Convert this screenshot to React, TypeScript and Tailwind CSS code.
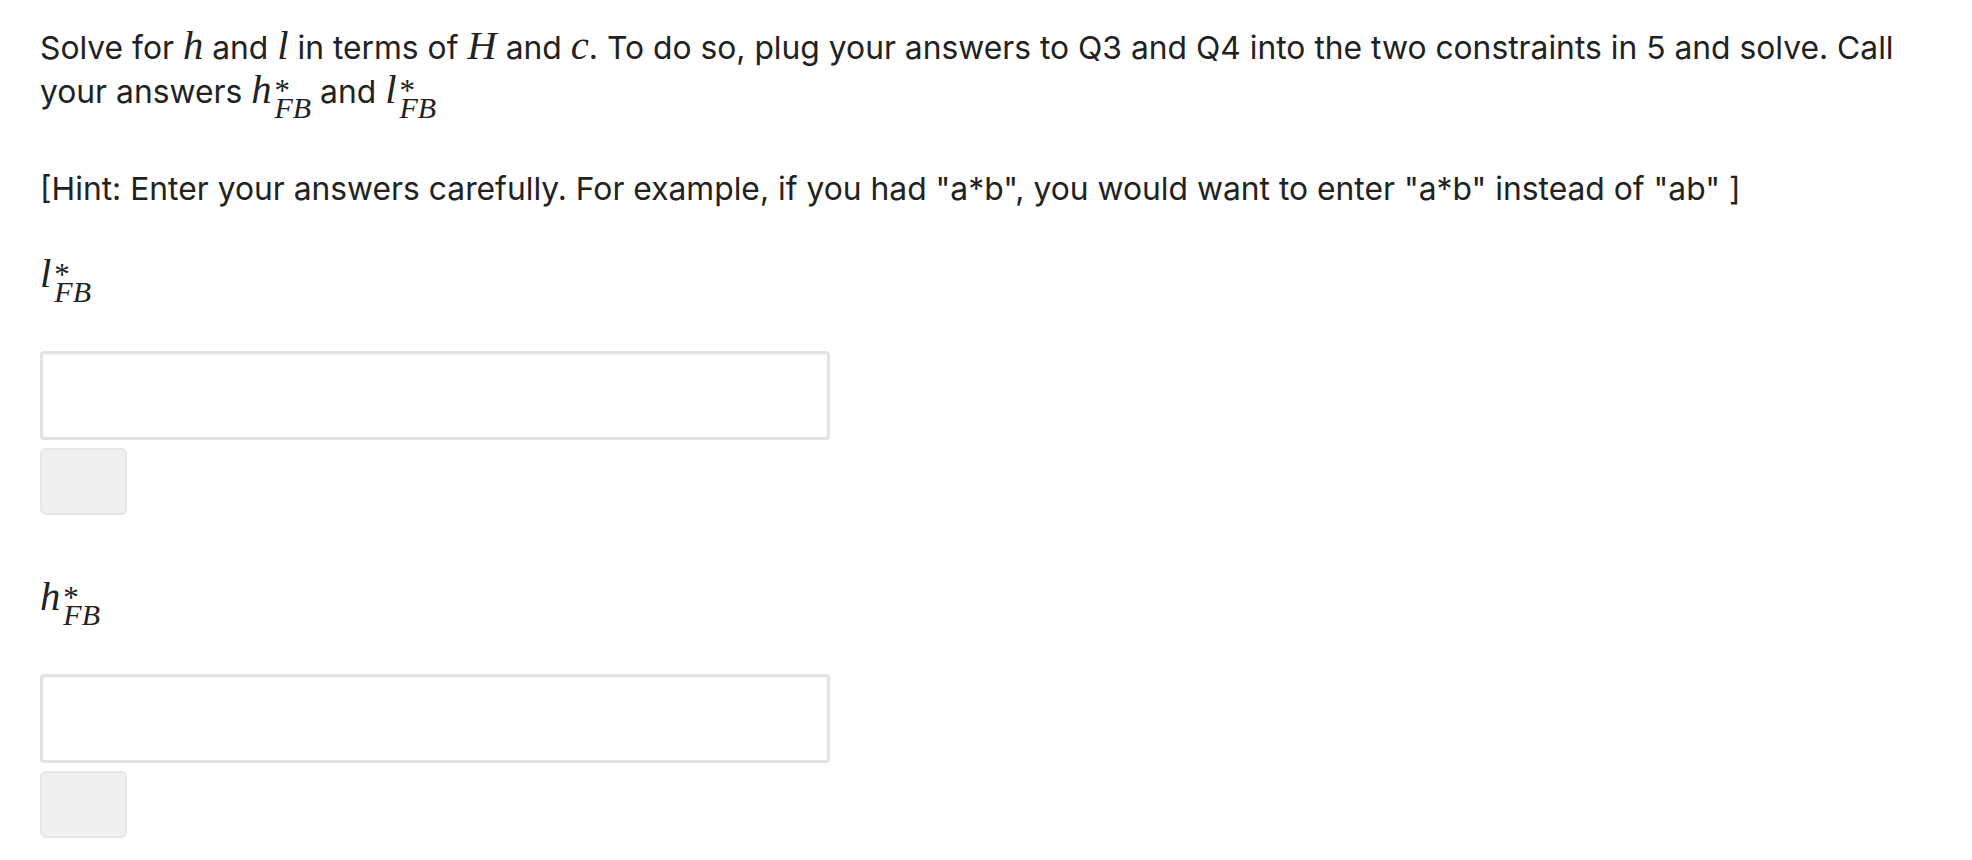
import type { ReactNode } from "react";

function Mv({ children }: { children: ReactNode }) {
  return <span className="font-['Liberation_Serif',serif] text-[1.28em] italic leading-none">{children}</span>;
}

function StarSym({ base }: { base: string }) {
  return (
    <span className="whitespace-nowrap font-['Liberation_Serif',serif] leading-none">
      <span className="text-[1.28em] italic">{base}</span>
      <span className="ml-[3px] -mb-[12px] inline-flex flex-col align-[2px] text-[30px] leading-none">
        <span className="text-[31px] leading-none">*</span>
        <span className="-mt-[13px] italic">FB</span>
      </span>
    </span>
  );
}

function AnswerField({ base }: { base: string }) {
  return (
    <div>
      <div className="h-[44px] leading-[44px]">
        <StarSym base={base} />
      </div>
      <input
        type="text"
        aria-label={`${base} FB`}
        className="mt-[53px] block h-[89px] w-[790px] rounded-[4px] border-[3px] border-[#e3e3e3] bg-white shadow-[inset_0_1px_2px_rgba(0,0,0,0.05)] outline-none"
      />
      <button
        type="button"
        className="mt-[8px] block h-[67px] w-[87px] rounded-[6px] border-2 border-[#e6e6e6] bg-[#f0f0f0]"
      />
    </div>
  );
}

export default function App() {
  return (
    <div className="min-h-screen bg-white px-10 pt-[26px] font-['Inter',sans-serif] text-[31.8px] leading-[44px] text-[#222222]">
      <p>
        Solve for <Mv>h</Mv> and <Mv>l</Mv> in terms of <Mv>H</Mv> and <Mv>c</Mv>. To do so, plug your answers to Q3 and
        Q4 into the two constraints in 5 and solve. Call your answers <StarSym base="h" /> and <StarSym base="l" />
      </p>
      <p className="mt-[53px]">
        [Hint: Enter your answers carefully. For example, if you had "a*b", you would want to enter "a*b" instead of "ab" ]
      </p>
      <div className="mt-[43px]">
        <AnswerField base="l" />
      </div>
      <div className="mt-[62px]">
        <AnswerField base="h" />
      </div>
    </div>
  );
}
